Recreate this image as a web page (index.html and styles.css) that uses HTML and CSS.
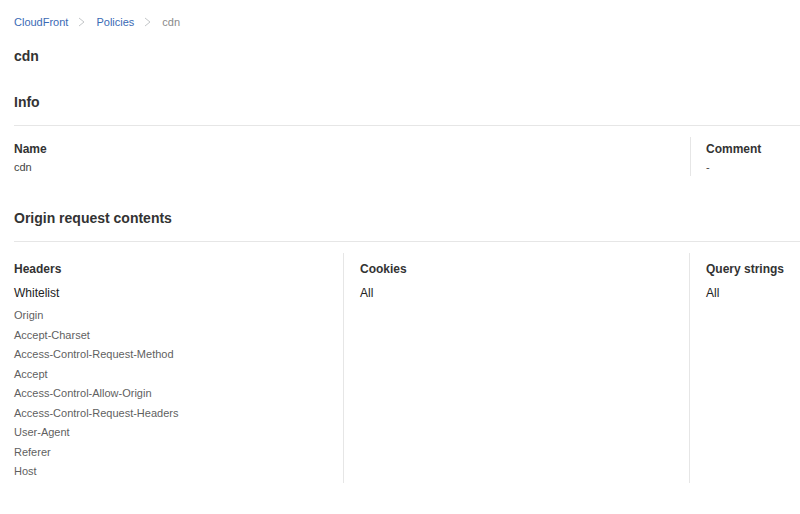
FILE: index.html
```html
<!DOCTYPE html>
<html lang="en">
<head>
<meta charset="utf-8">
<title>cdn - Policies - CloudFront</title>
<link rel="stylesheet" href="styles.css">
</head>
<body>
<div class="page">
  <nav class="breadcrumb">
    <a class="crumb-link" href="#">CloudFront</a>
    <svg class="chev" width="12" height="10" viewBox="0 0 12 10"><polyline points="3,1 8,5 3,9" fill="none" stroke="#c4c7c9" stroke-width="1"/></svg>
    <a class="crumb-link" href="#">Policies</a>
    <svg class="chev" width="12" height="10" viewBox="0 0 12 10"><polyline points="3,1 8,5 3,9" fill="none" stroke="#c4c7c9" stroke-width="1"/></svg>
    <span class="crumb-current">cdn</span>
  </nav>

  <h1 class="page-title">cdn</h1>

  <section class="section">
    <div class="section-header"><h2 class="section-title">Info</h2></div>
    <div class="info-grid">
      <div class="cell">
        <div class="label">Name</div>
        <div class="value">cdn</div>
      </div>
      <div class="cell cell-bordered">
        <div class="label">Comment</div>
        <div class="value">-</div>
      </div>
    </div>
  </section>

  <section class="section section-origin">
    <div class="section-header"><h2 class="section-title">Origin request contents</h2></div>
    <div class="origin-grid">
      <div class="cell ocell">
        <div class="label">Headers</div>
        <div class="main-value">Whitelist</div>
        <ul class="item-list">
          <li>Origin</li>
          <li>Accept-Charset</li>
          <li>Access-Control-Request-Method</li>
          <li>Accept</li>
          <li>Access-Control-Allow-Origin</li>
          <li>Access-Control-Request-Headers</li>
          <li>User-Agent</li>
          <li>Referer</li>
          <li>Host</li>
        </ul>
      </div>
      <div class="cell ocell cell-bordered">
        <div class="label">Cookies</div>
        <div class="main-value">All</div>
      </div>
      <div class="cell ocell cell-bordered">
        <div class="label">Query strings</div>
        <div class="main-value">All</div>
      </div>
    </div>
  </section>
</div>
</body>
</html>
```

FILE: styles.css
```css
html, body {
  margin: 0;
  padding: 0;
  background: #ffffff;
}

body {
  font-family: "Liberation Sans", Arial, Helvetica, sans-serif;
  color: #333333;
}

.page {
  padding: 14px 0 0 14px;
}

.breadcrumb {
  display: flex;
  align-items: center;
  height: 16px;
  font-size: 11px;
  line-height: 16px;
}

.crumb-link {
  color: #3a6ab5;
  text-decoration: none;
}

.chev {
  display: block;
  margin: 0 8px;
}

.crumb-current {
  color: #8a8a8a;
}

.page-title {
  margin: 16px 0 0;
  font-size: 14px;
  line-height: 20px;
  font-weight: bold;
  color: #333333;
}

.section {
  margin-top: 26px;
}

.section-origin {
  margin-top: 32px;
}

.section-header {
  padding-bottom: 13px;
  border-bottom: 1px solid #e6e6e6;
}

.section-title {
  margin: 0;
  font-size: 14px;
  line-height: 20px;
  font-weight: bold;
  color: #333333;
}

.info-grid {
  display: grid;
  grid-template-columns: 676px 1fr;
  margin-top: 11px;
}

.origin-grid {
  display: grid;
  grid-template-columns: 329px 346px 1fr;
  margin-top: 11px;
}

.cell {
  padding-top: 2px;
}

.ocell {
  padding-top: 6px;
  padding-bottom: 1px;
}

.cell-bordered {
  border-left: 1px solid #e6e6e6;
  padding-left: 15px;
}

.origin-grid .cell-bordered {
  padding-left: 16px;
}

.label {
  font-size: 12px;
  line-height: 20px;
  font-weight: bold;
  color: #333333;
}

.value {
  font-size: 11px;
  line-height: 17px;
  color: #444444;
}

.main-value {
  margin-top: 4px;
  font-size: 12px;
  line-height: 20px;
  color: #222222;
}

.item-list {
  list-style: none;
  margin: 3px 0 0;
  padding: 0;
  font-size: 11px;
  line-height: 19.5px;
  color: #5f5f5f;
}
```
